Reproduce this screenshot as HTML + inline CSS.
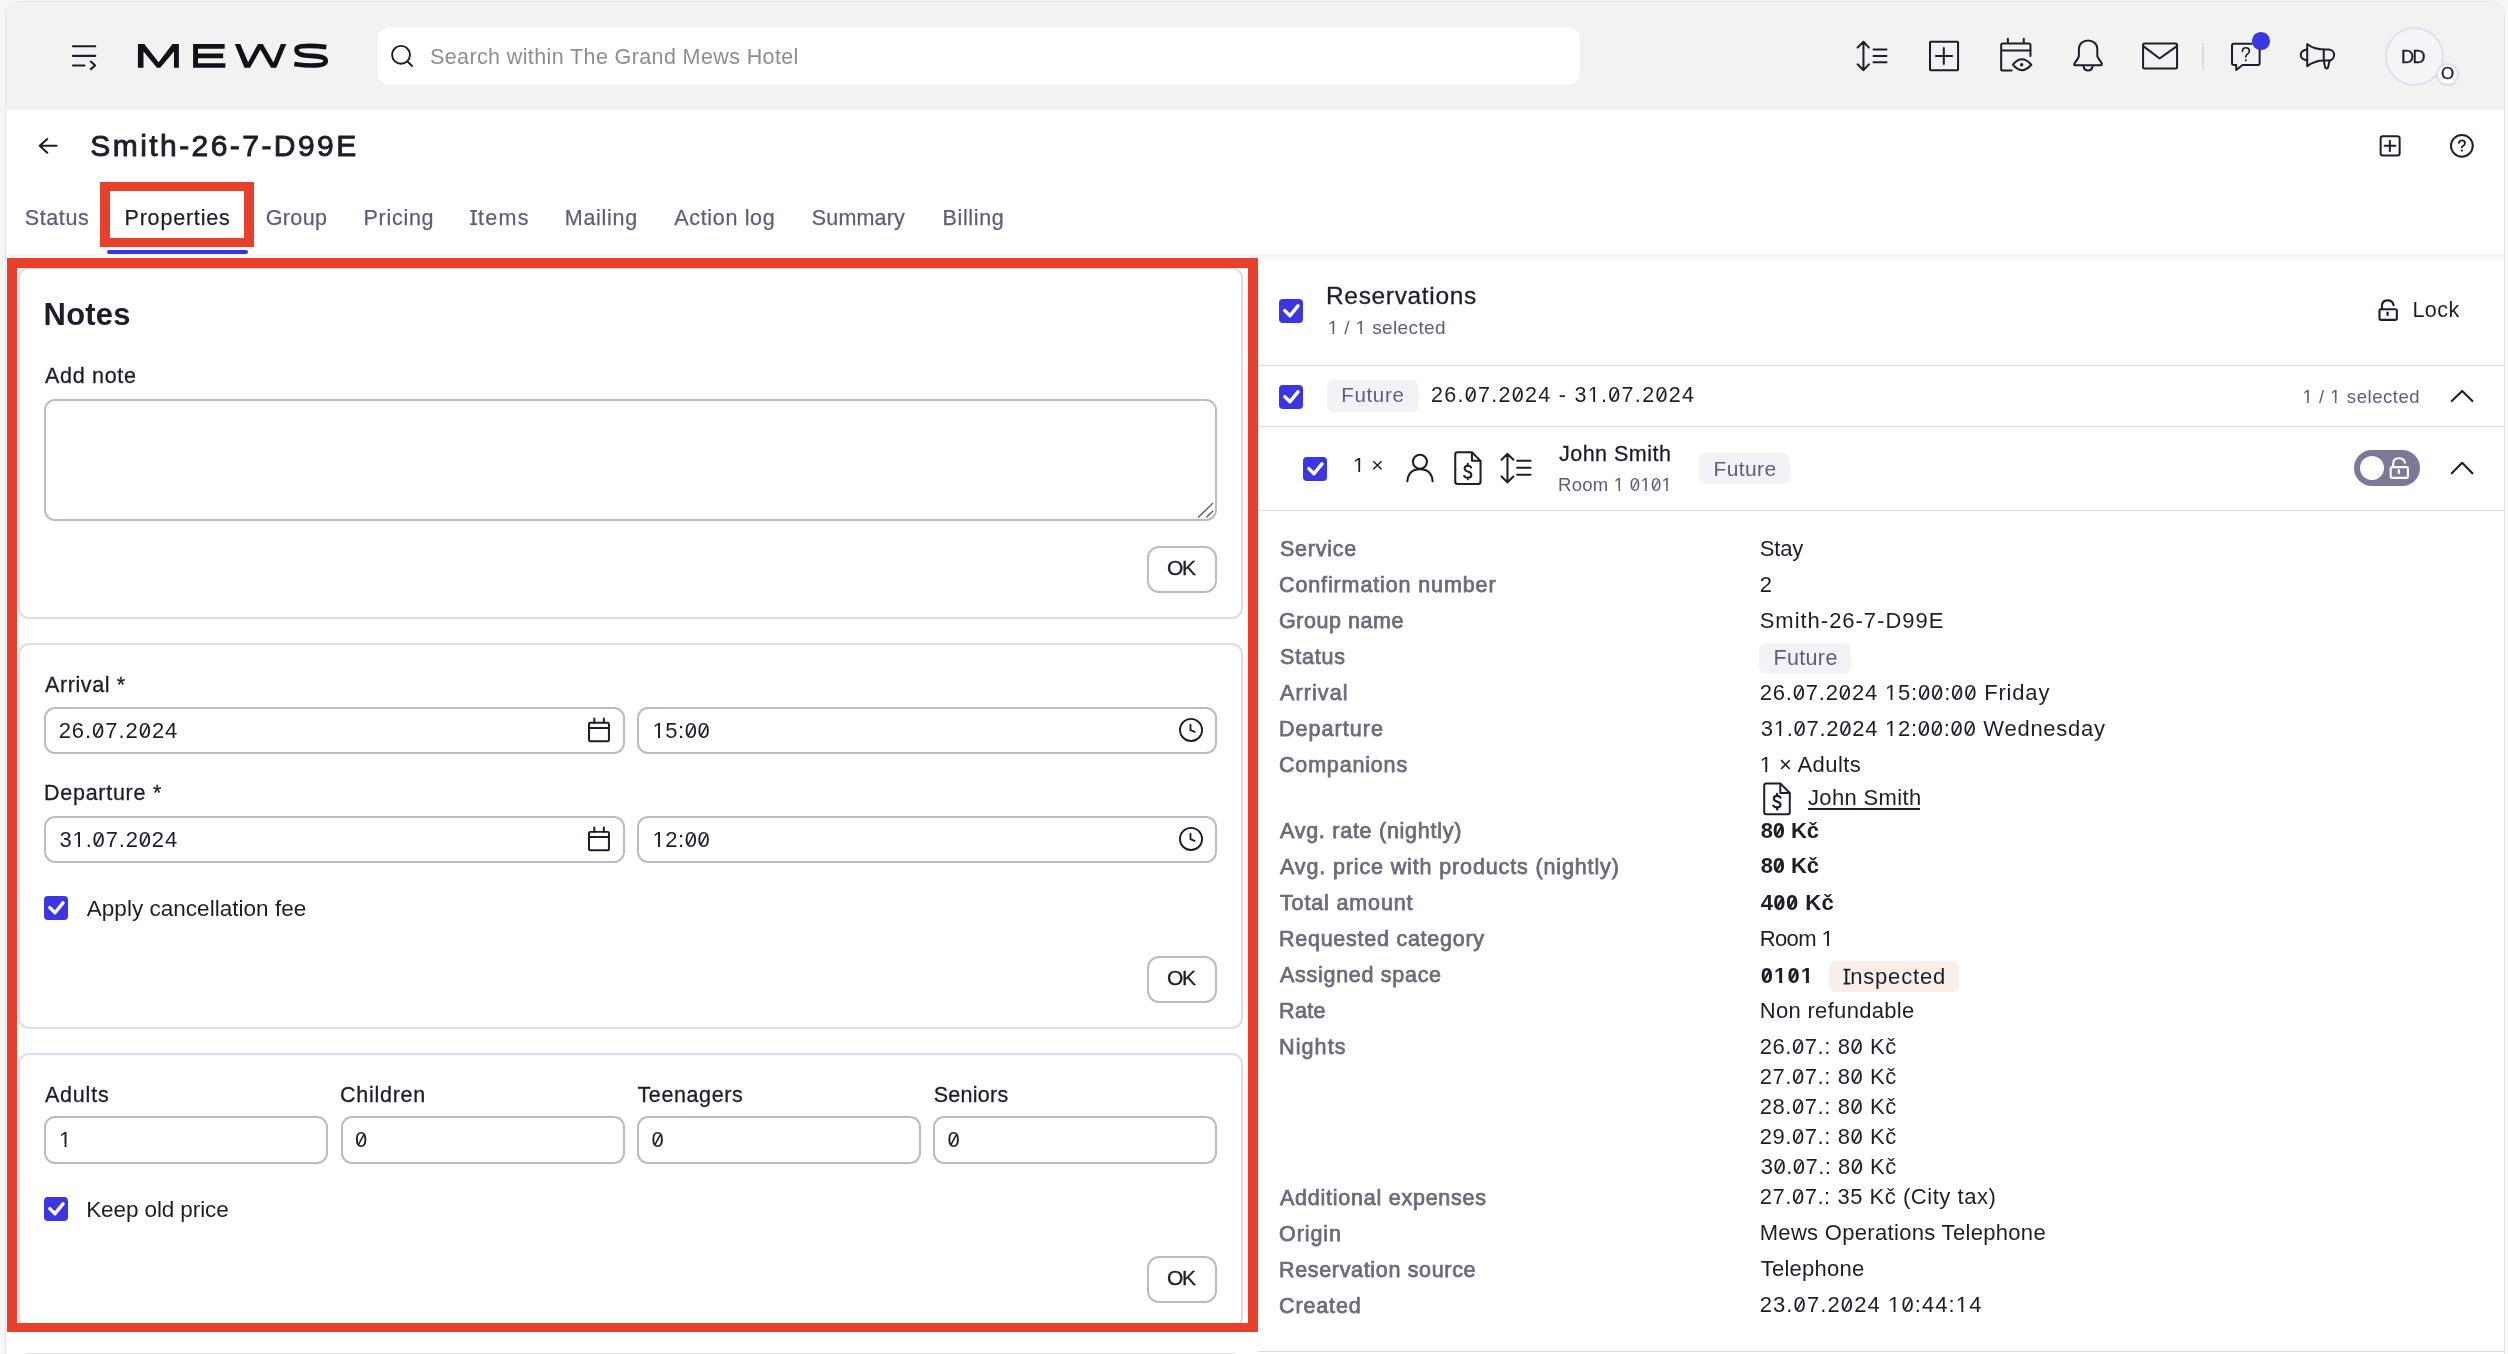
<!DOCTYPE html>
<html><head><meta charset="utf-8"><title>Mews</title>
<style>
html,body{margin:0;padding:0;width:2508px;height:1354px;overflow:hidden;background:#f6f6f6;font-family:"Liberation Sans",sans-serif;}
.t{position:absolute;line-height:0;white-space:pre;}
.abs{position:absolute;box-sizing:border-box;}
.red{position:absolute;box-sizing:border-box;border:10px solid #e8402a;}
.card{position:absolute;box-sizing:border-box;border:2px solid #dddce8;border-radius:11px;background:#fff;}
.inp{position:absolute;box-sizing:border-box;border:2px solid #bab9ce;border-radius:11px;background:#fff;}
.btn{position:absolute;box-sizing:border-box;border:2px solid #bab9ce;border-radius:12px;background:#fff;}
.cb{position:absolute;box-sizing:border-box;width:24px;height:24px;border-radius:4px;background:#3b35e3;}
.hr{position:absolute;height:1.3px;background:#dadae4;}
.badge{position:absolute;box-sizing:border-box;border-radius:7px;background:#f3f3f7;}

</style></head><body>
<!-- frame -->
<div class="abs" style="left:5px;top:1px;width:2500px;height:1400px;border:1px solid #e4e4e4;border-radius:14px;background:#fff;overflow:hidden">
  <div class="abs" style="left:0;top:0;width:100%;height:108px;background:#f2f2f2"></div>
</div>
<!-- search -->
<div class="abs" style="left:378px;top:27px;width:1202px;height:58px;background:#fff;border-radius:12px"></div>
<!-- avatar -->
<div class="abs" style="left:2384.5px;top:26.5px;width:59px;height:59px;border-radius:50%;background:#f5f5f8;border:2px solid #dedeec"></div>
<div class="abs" style="left:2435.5px;top:62.5px;width:23px;height:23px;border-radius:50%;background:#fff;border:2px solid #dedeec"></div>
<!-- tab underline + shadow -->
<div class="abs" style="left:6px;top:254px;width:2498px;height:8px;background:linear-gradient(#f2f2f2,#fff)"></div>
<div class="abs" style="left:107px;top:250px;width:141px;height:4px;border-radius:2px;background:#3a33e0"></div>
<!-- left cards -->
<div class="card" style="left:18px;top:267px;width:1225px;height:352px"></div>
<div class="card" style="left:18px;top:643px;width:1225px;height:386px"></div>
<div class="card" style="left:18px;top:1053px;width:1225px;height:276px"></div>
<div class="card" style="left:18px;top:1352.5px;width:1225px;height:200px"></div>
<!-- textarea -->
<div class="inp" style="left:44px;top:398.5px;width:1173px;height:122.5px"></div>
<!-- OK buttons -->
<div class="btn" style="left:1147px;top:545.5px;width:69.5px;height:47px"></div>
<div class="btn" style="left:1147px;top:955.5px;width:69.5px;height:47px"></div>
<div class="btn" style="left:1147px;top:1255.5px;width:69.5px;height:47px"></div>
<!-- date/time inputs -->
<div class="inp" style="left:44px;top:707px;width:581px;height:47px"></div>
<div class="inp" style="left:637px;top:707px;width:580px;height:47px"></div>
<div class="inp" style="left:44px;top:816px;width:581px;height:47px"></div>
<div class="inp" style="left:637px;top:816px;width:580px;height:47px"></div>
<!-- count inputs -->
<div class="inp" style="left:44px;top:1116px;width:284px;height:48px"></div>
<div class="inp" style="left:340.5px;top:1116px;width:284px;height:48px"></div>
<div class="inp" style="left:637px;top:1116px;width:284px;height:48px"></div>
<div class="inp" style="left:933px;top:1116px;width:284px;height:48px"></div>
<!-- checkboxes -->
<div class="cb" style="left:44px;top:896px"></div>
<div class="cb" style="left:44px;top:1197px"></div>
<div class="cb" style="left:1279px;top:299px"></div>
<div class="cb" style="left:1279px;top:385px"></div>
<div class="cb" style="left:1303px;top:457px"></div>
<!-- right panel dividers -->
<div class="hr" style="left:1258px;top:364.8px;width:1246px"></div>
<div class="hr" style="left:1258px;top:425.8px;width:1246px"></div>
<div class="hr" style="left:1258px;top:509.8px;width:1246px"></div>
<div class="hr" style="left:1258px;top:1350.8px;width:1246px"></div>
<!-- badges -->
<div class="badge" style="left:1327px;top:380px;width:91.5px;height:31.5px"></div>
<div class="badge" style="left:1699px;top:453px;width:91px;height:30.5px"></div>
<div class="badge" style="left:1759px;top:643px;width:92px;height:31px"></div>
<div class="badge" style="left:1829px;top:961px;width:130px;height:31px;background:#f9eee8"></div>
<!-- toggle -->
<div class="abs" style="left:2354px;top:450px;width:66px;height:36px;border-radius:18px;background:#7a7a98"></div>
<div class="abs" style="left:2359.8px;top:455.8px;width:24.4px;height:24.4px;border-radius:50%;background:#fff"></div>
<!-- link underline -->
<div class="abs" style="left:1808px;top:808.3px;width:112px;height:2px;background:#1d1e2b"></div>
<!-- header divider -->
<div class="abs" style="left:2202.2px;top:43px;width:1.7px;height:27px;background:#dcdce8"></div>
<!-- blue dot -->
<div class="abs" style="left:2252px;top:32px;width:17.6px;height:17.6px;border-radius:50%;background:#3b36e4"></div>

<div id="txt" style="position:absolute;left:0;top:0;width:2508px;height:1354px;will-change:transform">
<div class="t" style="left:430.00px;top:56.55px;font-size:21.5px;color:#8e8e8e;letter-spacing:0.384px">Search within The Grand Mews Hotel</div>
<div class="t" style="left:2401.00px;top:56.76px;font-size:18px;color:#1d1e2b;letter-spacing:-1.399px;-webkit-text-stroke:0.3px #1d1e2b">DD</div>
<div class="t" style="left:2441.10px;top:73.71px;font-size:17px;color:#1d1e2b;-webkit-text-stroke:0.3px #1d1e2b">O</div>
<div class="t" style="left:90.30px;top:145.80px;font-size:30px;color:#1d1e2b;letter-spacing:2.440px;-webkit-text-stroke:0.9px #1d1e2b">Smith-26-7-D99E</div>
<div class="t" style="left:24.70px;top:217.75px;font-size:21.5px;color:#5c5e7b;letter-spacing:0.620px;-webkit-text-stroke:0.25px #5c5e7b">Status</div>
<div class="t" style="left:124.50px;top:217.75px;font-size:21.5px;color:#1d1e2b;letter-spacing:0.807px;-webkit-text-stroke:0.25px #1d1e2b">Properties</div>
<div class="t" style="left:265.70px;top:217.75px;font-size:21.5px;color:#5c5e7b;letter-spacing:0.376px;-webkit-text-stroke:0.25px #5c5e7b">Group</div>
<div class="t" style="left:363.50px;top:217.75px;font-size:21.5px;color:#5c5e7b;letter-spacing:0.723px;-webkit-text-stroke:0.25px #5c5e7b">Pricing</div>
<div class="t" style="left:470.60px;top:217.75px;font-size:21.5px;color:#5c5e7b;letter-spacing:1.347px;-webkit-text-stroke:0.25px #5c5e7b">Items</div>
<div class="t" style="left:564.80px;top:217.75px;font-size:21.5px;color:#5c5e7b;letter-spacing:0.724px;-webkit-text-stroke:0.25px #5c5e7b">Mailing</div>
<div class="t" style="left:674.30px;top:217.75px;font-size:21.5px;color:#5c5e7b;letter-spacing:0.660px;-webkit-text-stroke:0.25px #5c5e7b">Action log</div>
<div class="t" style="left:811.80px;top:217.75px;font-size:21.5px;color:#5c5e7b;letter-spacing:0.161px;-webkit-text-stroke:0.25px #5c5e7b">Summary</div>
<div class="t" style="left:942.50px;top:217.75px;font-size:21.5px;color:#5c5e7b;letter-spacing:0.649px;-webkit-text-stroke:0.25px #5c5e7b">Billing</div>
<div class="t" style="left:43.60px;top:315.05px;font-size:31px;color:#1d1e2b;font-weight:700;letter-spacing:0.203px">Notes</div>
<div class="t" style="left:45.00px;top:376.45px;font-size:21.5px;color:#1d1e2b;letter-spacing:0.698px;-webkit-text-stroke:0.3px #1d1e2b">Add note</div>
<div class="t" style="left:1167.00px;top:568.42px;font-size:21px;color:#1d1e2b;letter-spacing:-1.334px;-webkit-text-stroke:0.3px #1d1e2b">OK</div>
<div class="t" style="left:1167.00px;top:978.42px;font-size:21px;color:#1d1e2b;letter-spacing:-1.334px;-webkit-text-stroke:0.3px #1d1e2b">OK</div>
<div class="t" style="left:1167.00px;top:1278.42px;font-size:21px;color:#1d1e2b;letter-spacing:-1.334px;-webkit-text-stroke:0.3px #1d1e2b">OK</div>
<div class="t" style="left:45.00px;top:684.55px;font-size:21.5px;color:#1d1e2b;letter-spacing:0.601px;-webkit-text-stroke:0.3px #1d1e2b">Arrival *</div>
<div class="t" style="left:58.70px;top:731.07px;font-size:22px;color:#1d1e2b;letter-spacing:0.948px">26.07.2024</div>
<div class="t" style="left:652.50px;top:731.17px;font-size:22px;color:#1d1e2b;letter-spacing:0.520px">15:00</div>
<div class="t" style="left:44.00px;top:793.35px;font-size:21.5px;color:#1d1e2b;letter-spacing:0.732px;-webkit-text-stroke:0.3px #1d1e2b">Departure *</div>
<div class="t" style="left:59.50px;top:839.87px;font-size:22px;color:#1d1e2b;letter-spacing:0.836px">31.07.2024</div>
<div class="t" style="left:652.50px;top:839.87px;font-size:22px;color:#1d1e2b;letter-spacing:0.520px">12:00</div>
<div class="t" style="left:86.80px;top:908.70px;font-size:22.5px;color:#1d1e2b;letter-spacing:0.025px">Apply cancellation fee</div>
<div class="t" style="left:45.00px;top:1094.65px;font-size:21.5px;color:#1d1e2b;letter-spacing:0.779px;-webkit-text-stroke:0.3px #1d1e2b">Adults</div>
<div class="t" style="left:340.00px;top:1094.65px;font-size:21.5px;color:#1d1e2b;letter-spacing:0.741px;-webkit-text-stroke:0.3px #1d1e2b">Children</div>
<div class="t" style="left:637.50px;top:1094.65px;font-size:21.5px;color:#1d1e2b;letter-spacing:0.606px;-webkit-text-stroke:0.3px #1d1e2b">Teenagers</div>
<div class="t" style="left:933.70px;top:1094.65px;font-size:21.5px;color:#1d1e2b;letter-spacing:0.275px;-webkit-text-stroke:0.3px #1d1e2b">Seniors</div>
<div class="t" style="left:59.00px;top:1139.77px;font-size:22px;color:#1d1e2b">1</div>
<div class="t" style="left:355.00px;top:1139.77px;font-size:22px;color:#1d1e2b">0</div>
<div class="t" style="left:651.50px;top:1139.77px;font-size:22px;color:#1d1e2b">0</div>
<div class="t" style="left:947.50px;top:1139.77px;font-size:22px;color:#1d1e2b">0</div>
<div class="t" style="left:86.20px;top:1209.60px;font-size:22.5px;color:#1d1e2b;letter-spacing:-0.102px">Keep old price</div>
<div class="t" style="left:1326.00px;top:295.51px;font-size:24.5px;color:#1d1e2b;letter-spacing:0.661px;-webkit-text-stroke:0.3px #1d1e2b">Reservations</div>
<div class="t" style="left:1327.70px;top:327.61px;font-size:19px;color:#5c5e7b;letter-spacing:0.373px">1 / 1 selected</div>
<div class="t" style="left:2412.40px;top:309.55px;font-size:21.5px;color:#1d1e2b;letter-spacing:0.445px">Lock</div>
<div class="t" style="left:1341.30px;top:395.49px;font-size:20.5px;color:#5c5e7b;letter-spacing:0.651px">Future</div>
<div class="t" style="left:1431.00px;top:395.45px;font-size:21.5px;color:#1d1e2b;letter-spacing:1.297px">26.07.2024 - 31.07.2024</div>
<div class="t" style="left:2302.40px;top:396.69px;font-size:18.5px;color:#5c5e7b;letter-spacing:0.550px">1 / 1 selected</div>
<div class="t" style="left:1353.00px;top:464.62px;font-size:21px;color:#1d1e2b">1</div>
<div class="t" style="left:1371.20px;top:464.72px;font-size:21px;color:#1d1e2b">×</div>
<div class="t" style="left:1559.00px;top:454.45px;font-size:21.5px;color:#1d1e2b;letter-spacing:0.478px;-webkit-text-stroke:0.3px #1d1e2b">John Smith</div>
<div class="t" style="left:1558.00px;top:484.59px;font-size:18.5px;color:#5c5e7b;letter-spacing:0.272px">Room 1 0101</div>
<div class="t" style="left:1713.60px;top:468.62px;font-size:21px;color:#5c5e7b;letter-spacing:0.357px">Future</div>
<div class="t" style="left:1280.00px;top:549.15px;font-size:21.5px;color:#6b6c7b;letter-spacing:0.761px;-webkit-text-stroke:0.75px #6b6c7b">Service</div>
<div class="t" style="left:1279.00px;top:585.15px;font-size:21.5px;color:#6b6c7b;letter-spacing:0.878px;-webkit-text-stroke:0.75px #6b6c7b">Confirmation number</div>
<div class="t" style="left:1279.00px;top:621.15px;font-size:21.5px;color:#6b6c7b;letter-spacing:0.539px;-webkit-text-stroke:0.75px #6b6c7b">Group name</div>
<div class="t" style="left:1280.00px;top:657.15px;font-size:21.5px;color:#6b6c7b;letter-spacing:0.800px;-webkit-text-stroke:0.75px #6b6c7b">Status</div>
<div class="t" style="left:1280.00px;top:693.15px;font-size:21.5px;color:#6b6c7b;letter-spacing:1.109px;-webkit-text-stroke:0.75px #6b6c7b">Arrival</div>
<div class="t" style="left:1279.00px;top:729.15px;font-size:21.5px;color:#6b6c7b;letter-spacing:1.044px;-webkit-text-stroke:0.75px #6b6c7b">Departure</div>
<div class="t" style="left:1279.00px;top:765.15px;font-size:21.5px;color:#6b6c7b;letter-spacing:0.827px;-webkit-text-stroke:0.75px #6b6c7b">Companions</div>
<div class="t" style="left:1280.00px;top:831.05px;font-size:21.5px;color:#6b6c7b;letter-spacing:0.737px;-webkit-text-stroke:0.75px #6b6c7b">Avg. rate (nightly)</div>
<div class="t" style="left:1280.00px;top:867.05px;font-size:21.5px;color:#6b6c7b;letter-spacing:0.866px;-webkit-text-stroke:0.75px #6b6c7b">Avg. price with products (nightly)</div>
<div class="t" style="left:1280.00px;top:903.15px;font-size:21.5px;color:#6b6c7b;letter-spacing:0.852px;-webkit-text-stroke:0.75px #6b6c7b">Total amount</div>
<div class="t" style="left:1279.00px;top:939.15px;font-size:21.5px;color:#6b6c7b;letter-spacing:0.742px;-webkit-text-stroke:0.75px #6b6c7b">Requested category</div>
<div class="t" style="left:1280.00px;top:975.25px;font-size:21.5px;color:#6b6c7b;letter-spacing:0.713px;-webkit-text-stroke:0.75px #6b6c7b">Assigned space</div>
<div class="t" style="left:1279.00px;top:1011.15px;font-size:21.5px;color:#6b6c7b;letter-spacing:0.381px;-webkit-text-stroke:0.75px #6b6c7b">Rate</div>
<div class="t" style="left:1279.00px;top:1047.05px;font-size:21.5px;color:#6b6c7b;letter-spacing:1.102px;-webkit-text-stroke:0.75px #6b6c7b">Nights</div>
<div class="t" style="left:1280.00px;top:1197.55px;font-size:21.5px;color:#6b6c7b;letter-spacing:0.756px;-webkit-text-stroke:0.75px #6b6c7b">Additional expenses</div>
<div class="t" style="left:1279.00px;top:1233.55px;font-size:21.5px;color:#6b6c7b;letter-spacing:0.921px;-webkit-text-stroke:0.75px #6b6c7b">Origin</div>
<div class="t" style="left:1279.00px;top:1269.55px;font-size:21.5px;color:#6b6c7b;letter-spacing:0.666px;-webkit-text-stroke:0.75px #6b6c7b">Reservation source</div>
<div class="t" style="left:1279.00px;top:1305.55px;font-size:21.5px;color:#6b6c7b;letter-spacing:0.861px;-webkit-text-stroke:0.75px #6b6c7b">Created</div>
<div class="t" style="left:1759.70px;top:549.27px;font-size:22px;color:#1d1e2b;letter-spacing:-0.174px">Stay</div>
<div class="t" style="left:1759.70px;top:585.27px;font-size:22px;color:#1d1e2b">2</div>
<div class="t" style="left:1759.70px;top:621.27px;font-size:22px;color:#1d1e2b;letter-spacing:0.980px">Smith-26-7-D99E</div>
<div class="t" style="left:1759.70px;top:693.27px;font-size:22px;color:#1d1e2b;letter-spacing:0.824px">26.07.2024 15:00:00 Friday</div>
<div class="t" style="left:1760.70px;top:729.27px;font-size:22px;color:#1d1e2b;letter-spacing:0.734px">31.07.2024 12:00:00 Wednesday</div>
<div class="t" style="left:1759.70px;top:765.47px;font-size:22px;color:#1d1e2b;letter-spacing:0.428px">1 × Adults</div>
<div class="t" style="left:1760.70px;top:831.07px;font-size:22px;color:#1d1e2b;font-weight:700;letter-spacing:-0.118px">80 Kč</div>
<div class="t" style="left:1760.70px;top:866.27px;font-size:22px;color:#1d1e2b;font-weight:700;letter-spacing:-0.118px">80 Kč</div>
<div class="t" style="left:1760.70px;top:903.37px;font-size:22px;color:#1d1e2b;font-weight:700;letter-spacing:0.419px">400 Kč</div>
<div class="t" style="left:1759.70px;top:939.47px;font-size:22px;color:#1d1e2b;letter-spacing:-0.619px">Room 1</div>
<div class="t" style="left:1760.70px;top:975.57px;font-size:22px;color:#1d1e2b;font-weight:700;letter-spacing:1.131px">0101</div>
<div class="t" style="left:1759.70px;top:1011.37px;font-size:22px;color:#1d1e2b;letter-spacing:0.322px">Non refundable</div>
<div class="t" style="left:1759.70px;top:1047.17px;font-size:22px;color:#1d1e2b;letter-spacing:0.571px">26.07.: 80 Kč</div>
<div class="t" style="left:1759.70px;top:1077.17px;font-size:22px;color:#1d1e2b;letter-spacing:0.571px">27.07.: 80 Kč</div>
<div class="t" style="left:1759.70px;top:1107.17px;font-size:22px;color:#1d1e2b;letter-spacing:0.571px">28.07.: 80 Kč</div>
<div class="t" style="left:1759.70px;top:1137.17px;font-size:22px;color:#1d1e2b;letter-spacing:0.571px">29.07.: 80 Kč</div>
<div class="t" style="left:1760.70px;top:1167.17px;font-size:22px;color:#1d1e2b;letter-spacing:0.488px">30.07.: 80 Kč</div>
<div class="t" style="left:1759.70px;top:1197.17px;font-size:22px;color:#1d1e2b;letter-spacing:0.538px">27.07.: 35 Kč (City tax)</div>
<div class="t" style="left:1759.70px;top:1233.17px;font-size:22px;color:#1d1e2b;letter-spacing:0.313px">Mews Operations Telephone</div>
<div class="t" style="left:1760.70px;top:1269.17px;font-size:22px;color:#1d1e2b;letter-spacing:0.238px">Telephone</div>
<div class="t" style="left:1759.70px;top:1305.17px;font-size:22px;color:#1d1e2b;letter-spacing:1.104px">23.07.2024 10:44:14</div>
<div class="t" style="left:1773.40px;top:658.45px;font-size:21.5px;color:#5c5e7b;letter-spacing:0.364px">Future</div>
<div class="t" style="left:1808.00px;top:798.17px;font-size:22px;color:#1d1e2b;letter-spacing:0.342px">John Smith</div>
<div class="t" style="left:1843.20px;top:976.97px;font-size:22px;color:#1d1e2b;letter-spacing:0.829px">Inspected</div>
</div>
<svg style="position:absolute;left:0;top:0" width="2508" height="1354" viewBox="0 0 2508 1354" fill="none" stroke-linecap="round" stroke-linejoin="round">
<!-- hamburger + search icon -->
<svg x="50" y="20" width="400" height="75" viewBox="0 0 2508 470" stroke="#1d1e2b" stroke-width="13">
  <path d="M144 165H284M144 225H284M144 285H216M256 260L283 285L256 308"/>
  <circle cx="2201" cy="218" r="56" stroke-width="12"/>
  <path d="M2243 262L2270 288" stroke-width="12"/>
</svg>
<!-- MEWS logo -->
<svg x="130" y="38" width="205" height="36" viewBox="0 0 2508 440" fill="#111118" stroke="none">
  <path d="M97 73H175L350 295L520 73H598V365H538V165L370 365H330L165 165V365H97Z"/>
  <path d="M772 73H1158V130H832V190H1140V248H832V308H1168L1165 365H772Z"/>
  <path d="M1283 73H1350L1445 295L1565 73H1625L1755 298L1845 73H1912L1790 365H1725L1595 140L1470 365H1400Z"/>
  <path d="M2402 112C2300 98 2150 95 2100 101C2030 110 2035 140 2040 160C2050 205 2120 215 2220 219C2330 225 2395 235 2395 280C2395 325 2320 336 2220 336C2120 336 2060 325 2010 318" fill="none" stroke="#111118" stroke-width="57" stroke-linecap="butt" stroke-linejoin="miter"/>
</svg>
<!-- header icons 1 -->
<svg x="1840" y="30" width="210" height="55" viewBox="0 0 2508 657" stroke="#1d1e2b" stroke-width="24">
  <path d="M280 140V480M210 210L280 140L345 210M210 410L280 480L345 410M400 232H555M400 310H555M400 385H555"/>
  <rect x="1075" y="140" width="335" height="340" rx="8"/>
  <path d="M1145 312H1340M1240 215V405"/>
  <path d="M2050 485H1945Q1925 485 1925 465V180Q1925 160 1945 160H2255Q2275 160 2275 180V310M1925 245H2275M2005 105V150M2195 105V150"/>
  <path d="M2065 415Q2170 285 2285 415Q2170 545 2065 415Z"/>
  <circle cx="2170" cy="415" r="20" fill="#1d1e2b" stroke="none"/>
</svg>
<!-- header icons 2 -->
<svg x="2060" y="25" width="210" height="60" viewBox="0 0 2508 717" stroke="#1d1e2b" stroke-width="24">
  <path d="M225 370L225 290C225 225 275 185 335 185C395 185 445 225 445 290L445 370C450 400 500 450 500 465C500 475 495 480 485 480L180 480C170 480 165 475 170 465C180 445 220 400 225 370Z"/>
  <path d="M280 490C285 525 310 545 335 545C360 545 385 525 390 490"/>
  <rect x="992" y="220" width="406" height="300" rx="18"/>
  <path d="M998 255L1190 400L1392 255"/>
  <path d="M2290 225H2075Q2055 225 2055 245V458Q2055 478 2075 478H2105V538L2180 478H2365Q2385 478 2385 458V300"/>
  <path d="M2180 315Q2180 272 2220 272Q2262 272 2262 312Q2262 340 2235 352Q2220 360 2220 380" stroke-width="20"/>
  <circle cx="2220" cy="420" r="12" fill="#1d1e2b" stroke="none"/>
</svg>
<!-- megaphone -->
<svg x="2290" y="20" width="180" height="75" viewBox="0 0 2508 1045" stroke="#1d1e2b" stroke-width="28">
  <path d="M470 410C380 410 300 385 240 335V645C300 600 380 565 470 565Z"/><path d="M470 410H545A78 78 0 0 1 545 565H470M470 565L490 660Q510 690 530 660L552 565M228 412Q150 432 150 487Q150 542 228 560"/>
</svg>
<!-- back arrow -->
<svg x="20" y="120" width="360" height="55" viewBox="0 0 2508 383" stroke="#1d1e2b" stroke-width="14">
  <path d="M137 180H255M190 132L137 180L190 228"/>
</svg>
<!-- title right icons -->
<svg x="2360" y="120" width="140" height="55" viewBox="0 0 2508 985" stroke="#1d1e2b" stroke-width="36">
  <rect x="370" y="290" width="340" height="345" rx="40"/>
  <path d="M440 462H635M535 370V560"/>
  <circle cx="1825" cy="462" r="195"/>
  <path d="M1770 410Q1785 365 1830 365Q1880 365 1880 415Q1880 450 1840 470Q1825 478 1825 490" stroke-width="34"/>
  <circle cx="1825" cy="548" r="20" fill="#1d1e2b" stroke="none"/>
</svg>
<!-- calendar icons in date inputs -->
<svg x="560" y="700" width="140" height="180" viewBox="0 0 1053 1354" stroke="#1d1e2b" stroke-width="15">
  <rect x="218" y="172" width="150" height="138" rx="10"/>
  <path d="M218 210H368M258 140V172M330 140V172"/>
  <g transform="translate(0 820)">
  <rect x="218" y="172" width="150" height="138" rx="10"/>
  <path d="M218 210H368M258 140V172M330 140V172"/>
  </g>
</svg>
<!-- clock icons -->
<svg x="1160" y="700" width="70" height="60" viewBox="0 0 1580 1354" stroke="#1d1e2b" stroke-width="42">
  <circle cx="700" cy="675" r="250"/>
  <path d="M688 555V680L780 720"/>
</svg>
<svg x="1160" y="809" width="70" height="60" viewBox="0 0 1580 1354" stroke="#1d1e2b" stroke-width="42">
  <circle cx="700" cy="675" r="250"/>
  <path d="M688 555V680L780 720"/>
</svg>
<!-- textarea resize handle -->
<svg x="1130" y="480" width="140" height="200" viewBox="0 0 948 1354" stroke="#555" stroke-width="9">
  <path d="M465 250L560 158M520 250L560 212"/>
</svg>
<!-- checkmarks -->
<g stroke="#fff" stroke-width="3.4" fill="none">
  <path d="M49.8 907.6L55 912.7L63 902.9"/>
  <path d="M49.8 1208.6L55 1213.7L63 1203.9"/>
  <path d="M1284.8 310.6L1290 315.7L1298 305.9"/>
  <path d="M1284.8 396.6L1290 401.7L1298 391.9"/>
  <path d="M1308.8 468.6L1314 473.7L1322 463.9"/>
</g>
<!-- row 3 icons -->
<svg x="1290" y="435" width="270" height="70" viewBox="0 0 2508 650" stroke="#1d1e2b" stroke-width="19">
  <circle cx="1207" cy="248" r="65"/>
  <path d="M1090 430Q1100 318 1207 318Q1315 318 1325 430"/>
  <path d="M1690 160H1555Q1535 160 1535 180V435Q1535 455 1555 455H1750Q1770 455 1770 435V240L1690 160V240H1770"/>
  <path d="M1683 302Q1672 285 1652 285Q1622 285 1622 312Q1622 332 1652 340Q1685 348 1685 372Q1685 398 1652 398Q1628 398 1618 380M1652 268V285M1652 398V412" stroke-width="19"/>
  <path d="M2020 175V440M1965 230L2020 175L2075 230M1965 385L2020 440L2075 385M2110 240H2235M2110 305H2235M2110 370H2235"/>
</svg>
<!-- lock, toggle lock, chevrons -->
<svg x="2340" y="280" width="160" height="220" viewBox="0 0 985 1354" stroke="#1d1e2b" stroke-width="13">
  <rect x="243" y="180" width="107" height="65" rx="8"/>
  <path d="M258 180V162Q258 125 293 125Q325 125 330 155"/>
  <path d="M293 200V215" stroke-width="14"/>
  <path d="M688 745L752 683L815 745"/>
  <path d="M688 1190L752 1125L815 1190"/>
  <g stroke="#fff">
  <rect x="312" y="1152" width="106" height="66" rx="8"/>
  <path d="M327 1152V1133Q327 1097 362 1097Q395 1097 400 1125"/>
  <path d="M362 1170V1188" stroke-width="14"/>
  </g>
</svg>
<!-- companions doc icon -->
<svg x="1750" y="680" width="250" height="200" viewBox="0 0 1692 1354" stroke="#1d1e2b" stroke-width="13.5">
  <path d="M205 700H110Q96 700 96 714V895Q96 909 110 909H255Q269 909 269 895V765L205 700V765H269"/>
  <path d="M206 796Q199 784 183 784Q161 784 161 803Q161 818 183 823Q206 828 206 845Q206 863 183 863Q166 863 158 851M183 771V784M183 863V877" stroke-width="15"/>
</svg>
</svg>

<div class="red" style="left:100px;top:182px;width:154px;height:64.5px;border-width:9.5px 10px 9.5px 10px"></div>
<div class="red" style="left:7px;top:258px;width:1251px;height:1073.5px;border-width:10px 10px 9.7px 10px"></div>
<svg style="position:absolute;left:0;top:0" width="2508" height="1354" viewBox="0 0 2508 1354"><rect x="653.48" y="735.36" width="4.56" height="4.64" fill="#fff"/><rect x="659.98" y="735.36" width="4.38" height="4.64" fill="#fff"/><rect x="73.54" y="844.06" width="4.56" height="4.64" fill="#fff"/><rect x="80.04" y="844.06" width="4.38" height="4.64" fill="#fff"/><rect x="653.48" y="844.06" width="4.56" height="4.64" fill="#fff"/><rect x="659.98" y="844.06" width="4.38" height="4.64" fill="#fff"/><rect x="59.98" y="1143.96" width="4.56" height="4.64" fill="#fff"/><rect x="66.48" y="1143.96" width="4.38" height="4.64" fill="#fff"/><rect x="1328.43" y="330.98" width="4.03" height="4.42" fill="#fff"/><rect x="1334.14" y="330.98" width="3.88" height="4.42" fill="#fff"/><rect x="1356.33" y="330.98" width="4.03" height="4.42" fill="#fff"/><rect x="1362.04" y="330.98" width="3.88" height="4.42" fill="#fff"/><rect x="1588.75" y="399.49" width="4.47" height="4.61" fill="#fff"/><rect x="1595.12" y="399.49" width="4.30" height="4.61" fill="#fff"/><rect x="2303.10" y="399.92" width="3.94" height="4.38" fill="#fff"/><rect x="2308.68" y="399.92" width="3.80" height="4.38" fill="#fff"/><rect x="2331.01" y="399.92" width="3.94" height="4.38" fill="#fff"/><rect x="2336.58" y="399.92" width="3.80" height="4.38" fill="#fff"/><rect x="1353.90" y="468.53" width="4.38" height="4.57" fill="#fff"/><rect x="1360.14" y="468.53" width="4.22" height="4.57" fill="#fff"/><rect x="1614.55" y="487.82" width="3.94" height="4.38" fill="#fff"/><rect x="1620.13" y="487.82" width="3.80" height="4.38" fill="#fff"/><rect x="1641.08" y="487.82" width="3.94" height="4.38" fill="#fff"/><rect x="1646.66" y="487.82" width="3.80" height="4.38" fill="#fff"/><rect x="1662.21" y="487.82" width="3.94" height="4.38" fill="#fff"/><rect x="1667.79" y="487.82" width="3.80" height="4.38" fill="#fff"/><rect x="1885.94" y="697.46" width="4.56" height="4.64" fill="#fff"/><rect x="1892.45" y="697.46" width="4.38" height="4.64" fill="#fff"/><rect x="1774.63" y="733.46" width="4.56" height="4.64" fill="#fff"/><rect x="1781.13" y="733.46" width="4.38" height="4.64" fill="#fff"/><rect x="1885.94" y="733.46" width="4.56" height="4.64" fill="#fff"/><rect x="1892.45" y="733.46" width="4.38" height="4.64" fill="#fff"/><rect x="1760.66" y="769.66" width="4.56" height="4.64" fill="#fff"/><rect x="1767.16" y="769.66" width="4.38" height="4.64" fill="#fff"/><rect x="1822.35" y="943.66" width="4.56" height="4.64" fill="#fff"/><rect x="1828.85" y="943.66" width="4.38" height="4.64" fill="#fff"/><rect x="1774.73" y="979.15" width="4.45" height="5.25" fill="#fff"/><rect x="1782.20" y="979.15" width="4.17" height="5.25" fill="#fff"/><rect x="1801.47" y="979.15" width="4.45" height="5.25" fill="#fff"/><rect x="1808.93" y="979.15" width="4.17" height="5.25" fill="#fff"/><rect x="1889.02" y="1309.36" width="4.56" height="4.64" fill="#fff"/><rect x="1895.52" y="1309.36" width="4.38" height="4.64" fill="#fff"/><rect x="1956.80" y="1309.36" width="4.56" height="4.64" fill="#fff"/><rect x="1963.30" y="1309.36" width="4.38" height="4.64" fill="#fff"/><line x1="95.59" y1="735.84" x2="100.87" y2="726.16" stroke="#1d1e2b" stroke-width="1.54"/><line x1="142.19" y1="735.84" x2="147.47" y2="726.16" stroke="#1d1e2b" stroke-width="1.54"/><line x1="688.12" y1="735.94" x2="693.40" y2="726.26" stroke="#1d1e2b" stroke-width="1.54"/><line x1="700.87" y1="735.94" x2="706.15" y2="726.26" stroke="#1d1e2b" stroke-width="1.54"/><line x1="96.05" y1="844.64" x2="101.33" y2="834.96" stroke="#1d1e2b" stroke-width="1.54"/><line x1="142.23" y1="844.64" x2="147.51" y2="834.96" stroke="#1d1e2b" stroke-width="1.54"/><line x1="688.12" y1="844.64" x2="693.40" y2="834.96" stroke="#1d1e2b" stroke-width="1.54"/><line x1="700.87" y1="844.64" x2="706.15" y2="834.96" stroke="#1d1e2b" stroke-width="1.54"/><line x1="358.48" y1="1144.54" x2="363.76" y2="1134.86" stroke="#1d1e2b" stroke-width="1.54"/><line x1="654.98" y1="1144.54" x2="660.26" y2="1134.86" stroke="#1d1e2b" stroke-width="1.54"/><line x1="950.98" y1="1144.54" x2="956.26" y2="1134.86" stroke="#1d1e2b" stroke-width="1.54"/><line x1="1468.16" y1="400.10" x2="1473.32" y2="390.64" stroke="#1d1e2b" stroke-width="1.51"/><line x1="1515.19" y1="400.10" x2="1520.35" y2="390.64" stroke="#1d1e2b" stroke-width="1.51"/><line x1="1611.74" y1="400.10" x2="1616.90" y2="390.64" stroke="#1d1e2b" stroke-width="1.51"/><line x1="1658.77" y1="400.10" x2="1663.93" y2="390.64" stroke="#1d1e2b" stroke-width="1.51"/><line x1="1632.74" y1="488.60" x2="1637.18" y2="480.45" stroke="#5c5e7b" stroke-width="1.30"/><line x1="1653.86" y1="488.60" x2="1658.30" y2="480.45" stroke="#5c5e7b" stroke-width="1.30"/><line x1="1796.21" y1="698.04" x2="1801.49" y2="688.36" stroke="#1d1e2b" stroke-width="1.54"/><line x1="1842.32" y1="698.04" x2="1847.60" y2="688.36" stroke="#1d1e2b" stroke-width="1.54"/><line x1="1921.49" y1="698.04" x2="1926.77" y2="688.36" stroke="#1d1e2b" stroke-width="1.54"/><line x1="1934.55" y1="698.04" x2="1939.83" y2="688.36" stroke="#1d1e2b" stroke-width="1.54"/><line x1="1954.55" y1="698.04" x2="1959.83" y2="688.36" stroke="#1d1e2b" stroke-width="1.54"/><line x1="1967.60" y1="698.04" x2="1972.88" y2="688.36" stroke="#1d1e2b" stroke-width="1.54"/><line x1="1796.94" y1="734.04" x2="1802.22" y2="724.36" stroke="#1d1e2b" stroke-width="1.54"/><line x1="1842.69" y1="734.04" x2="1847.97" y2="724.36" stroke="#1d1e2b" stroke-width="1.54"/><line x1="1921.24" y1="734.04" x2="1926.52" y2="724.36" stroke="#1d1e2b" stroke-width="1.54"/><line x1="1934.21" y1="734.04" x2="1939.49" y2="724.36" stroke="#1d1e2b" stroke-width="1.54"/><line x1="1954.02" y1="734.04" x2="1959.30" y2="724.36" stroke="#1d1e2b" stroke-width="1.54"/><line x1="1966.99" y1="734.04" x2="1972.27" y2="724.36" stroke="#1d1e2b" stroke-width="1.54"/><line x1="1776.27" y1="835.84" x2="1781.55" y2="826.16" stroke="#1d1e2b" stroke-width="2.20"/><line x1="1776.27" y1="871.04" x2="1781.55" y2="861.36" stroke="#1d1e2b" stroke-width="2.20"/><line x1="1776.80" y1="908.14" x2="1782.08" y2="898.46" stroke="#1d1e2b" stroke-width="2.20"/><line x1="1789.46" y1="908.14" x2="1794.74" y2="898.46" stroke="#1d1e2b" stroke-width="2.20"/><line x1="1764.16" y1="980.34" x2="1769.44" y2="970.66" stroke="#1d1e2b" stroke-width="2.20"/><line x1="1790.88" y1="980.34" x2="1796.16" y2="970.66" stroke="#1d1e2b" stroke-width="2.20"/><line x1="1795.44" y1="1051.94" x2="1800.72" y2="1042.26" stroke="#1d1e2b" stroke-width="1.54"/><line x1="1853.91" y1="1051.94" x2="1859.19" y2="1042.26" stroke="#1d1e2b" stroke-width="1.54"/><line x1="1795.44" y1="1081.94" x2="1800.72" y2="1072.26" stroke="#1d1e2b" stroke-width="1.54"/><line x1="1853.91" y1="1081.94" x2="1859.19" y2="1072.26" stroke="#1d1e2b" stroke-width="1.54"/><line x1="1795.44" y1="1111.94" x2="1800.72" y2="1102.26" stroke="#1d1e2b" stroke-width="1.54"/><line x1="1853.91" y1="1111.94" x2="1859.19" y2="1102.26" stroke="#1d1e2b" stroke-width="1.54"/><line x1="1795.44" y1="1141.94" x2="1800.72" y2="1132.26" stroke="#1d1e2b" stroke-width="1.54"/><line x1="1853.91" y1="1141.94" x2="1859.19" y2="1132.26" stroke="#1d1e2b" stroke-width="1.54"/><line x1="1776.88" y1="1171.94" x2="1782.16" y2="1162.26" stroke="#1d1e2b" stroke-width="1.54"/><line x1="1796.21" y1="1171.94" x2="1801.49" y2="1162.26" stroke="#1d1e2b" stroke-width="1.54"/><line x1="1854.18" y1="1171.94" x2="1859.46" y2="1162.26" stroke="#1d1e2b" stroke-width="1.54"/><line x1="1795.35" y1="1201.94" x2="1800.63" y2="1192.26" stroke="#1d1e2b" stroke-width="1.54"/><line x1="1797.05" y1="1309.94" x2="1802.33" y2="1300.26" stroke="#1d1e2b" stroke-width="1.54"/><line x1="1844.29" y1="1309.94" x2="1849.57" y2="1300.26" stroke="#1d1e2b" stroke-width="1.54"/><line x1="1904.85" y1="1309.94" x2="1910.13" y2="1300.26" stroke="#1d1e2b" stroke-width="1.54"/><path d="M470.2 210.9H477M470.2 224.2H477" stroke="#5c5e7b" stroke-width="1.8"/><path d="M1843.6 969.6H1850.4M1843.6 983.6H1850.4" stroke="#1d1e2b" stroke-width="1.8"/></svg>
</body></html>
